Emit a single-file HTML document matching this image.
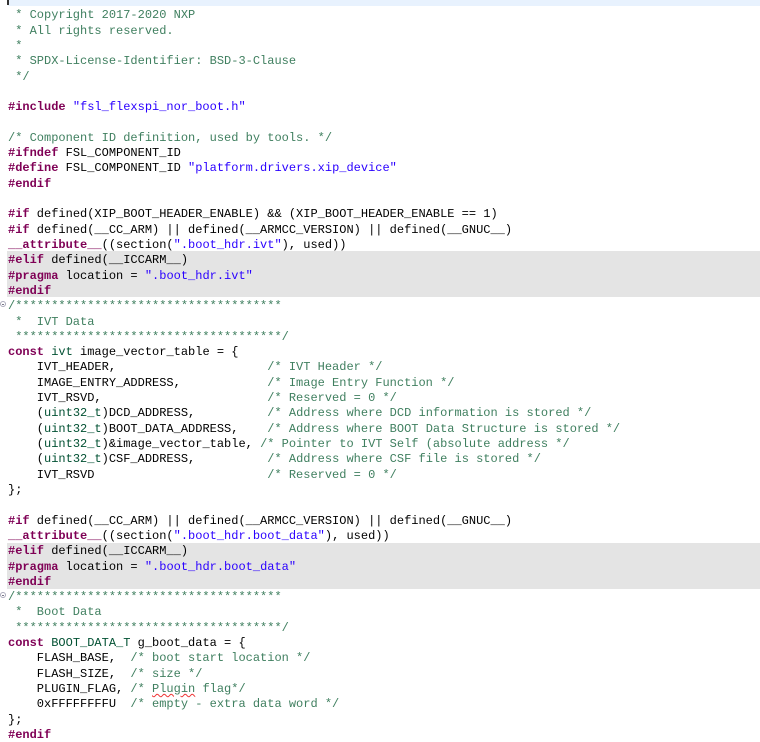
<!DOCTYPE html>
<html><head><meta charset="utf-8"><style>
html,body{margin:0;padding:0;background:#fff;width:760px;height:742px;overflow:hidden;position:relative}
#code{position:absolute;left:8px;top:8.3px;font-family:"Liberation Mono",monospace;font-size:12px;line-height:15.32px;white-space:pre;color:#000}
.c{color:#3f7f5f}.k{color:#7f0055;font-weight:bold}.s{color:#2a00ff}.t{color:#005032}.u{color:#005032}
.g{position:absolute;left:7px;right:0;background:#e4e4e4}
.f{position:absolute;left:0;width:6px;height:6px;border:1px solid #aab;border-radius:50%;box-sizing:border-box}
.f:after{content:"";position:absolute;left:1px;top:2px;width:2px;height:1px;background:#778}
.sq{text-decoration:underline wavy #e33;text-decoration-thickness:1px}
</style></head><body>
<div style="position:absolute;left:8px;top:0;right:0;height:6px;background:#e8f2fe"></div>
<div style="position:absolute;left:7px;top:0;width:2px;height:5px;background:#333"></div>
<div class="g" style="top:251.4px;height:46px"></div>
<div class="g" style="top:542.5px;height:46px"></div>
<div class="f" style="top:301px"></div>
<div class="f" style="top:592px"></div>
<div id="code"><span class="c"> * Copyright 2017-2020 NXP
 * All rights reserved.
 *
 * SPDX-License-Identifier: BSD-3-Clause
 */</span>

<span class="k">#include</span> <span class="s">"fsl_flexspi_nor_boot.h"</span>

<span class="c">/* Component ID definition, used by tools. */</span>
<span class="k">#ifndef</span> FSL_COMPONENT_ID
<span class="k">#define</span> FSL_COMPONENT_ID <span class="s">"platform.drivers.xip_device"</span>
<span class="k">#endif</span>

<span class="k">#if</span> defined(XIP_BOOT_HEADER_ENABLE) &amp;&amp; (XIP_BOOT_HEADER_ENABLE == 1)
<span class="k">#if</span> defined(__CC_ARM) || defined(__ARMCC_VERSION) || defined(__GNUC__)
<span class="k">__attribute__</span>((section(<span class="s">".boot_hdr.ivt"</span>), used))
<span class="k">#elif</span> defined(__ICCARM__)
<span class="k">#pragma</span> location = <span class="s">".boot_hdr.ivt"</span>
<span class="k">#endif</span>
<span class="c">/*************************************
 *  IVT Data
 *************************************/</span>
<span class="k">const</span> <span class="t">ivt</span> image_vector_table = {
    IVT_HEADER,                     <span class="c">/* IVT Header */</span>
    IMAGE_ENTRY_ADDRESS,            <span class="c">/* Image Entry Function */</span>
    IVT_RSVD,                       <span class="c">/* Reserved = 0 */</span>
    (<span class="u">uint32_t</span>)DCD_ADDRESS,          <span class="c">/* Address where DCD information is stored */</span>
    (<span class="u">uint32_t</span>)BOOT_DATA_ADDRESS,    <span class="c">/* Address where BOOT Data Structure is stored */</span>
    (<span class="u">uint32_t</span>)&amp;image_vector_table, <span class="c">/* Pointer to IVT Self (absolute address */</span>
    (<span class="u">uint32_t</span>)CSF_ADDRESS,          <span class="c">/* Address where CSF file is stored */</span>
    IVT_RSVD                        <span class="c">/* Reserved = 0 */</span>
};

<span class="k">#if</span> defined(__CC_ARM) || defined(__ARMCC_VERSION) || defined(__GNUC__)
<span class="k">__attribute__</span>((section(<span class="s">".boot_hdr.boot_data"</span>), used))
<span class="k">#elif</span> defined(__ICCARM__)
<span class="k">#pragma</span> location = <span class="s">".boot_hdr.boot_data"</span>
<span class="k">#endif</span>
<span class="c">/*************************************
 *  Boot Data
 *************************************/</span>
<span class="k">const</span> <span class="t">BOOT_DATA_T</span> g_boot_data = {
    FLASH_BASE,  <span class="c">/* boot start location */</span>
    FLASH_SIZE,  <span class="c">/* size */</span>
    PLUGIN_FLAG, <span class="c">/* <span class="sq">Plugin</span> flag*/</span>
    0xFFFFFFFFU  <span class="c">/* empty - extra data word */</span>
};
<span class="k">#endif</span></div>
</body></html>
